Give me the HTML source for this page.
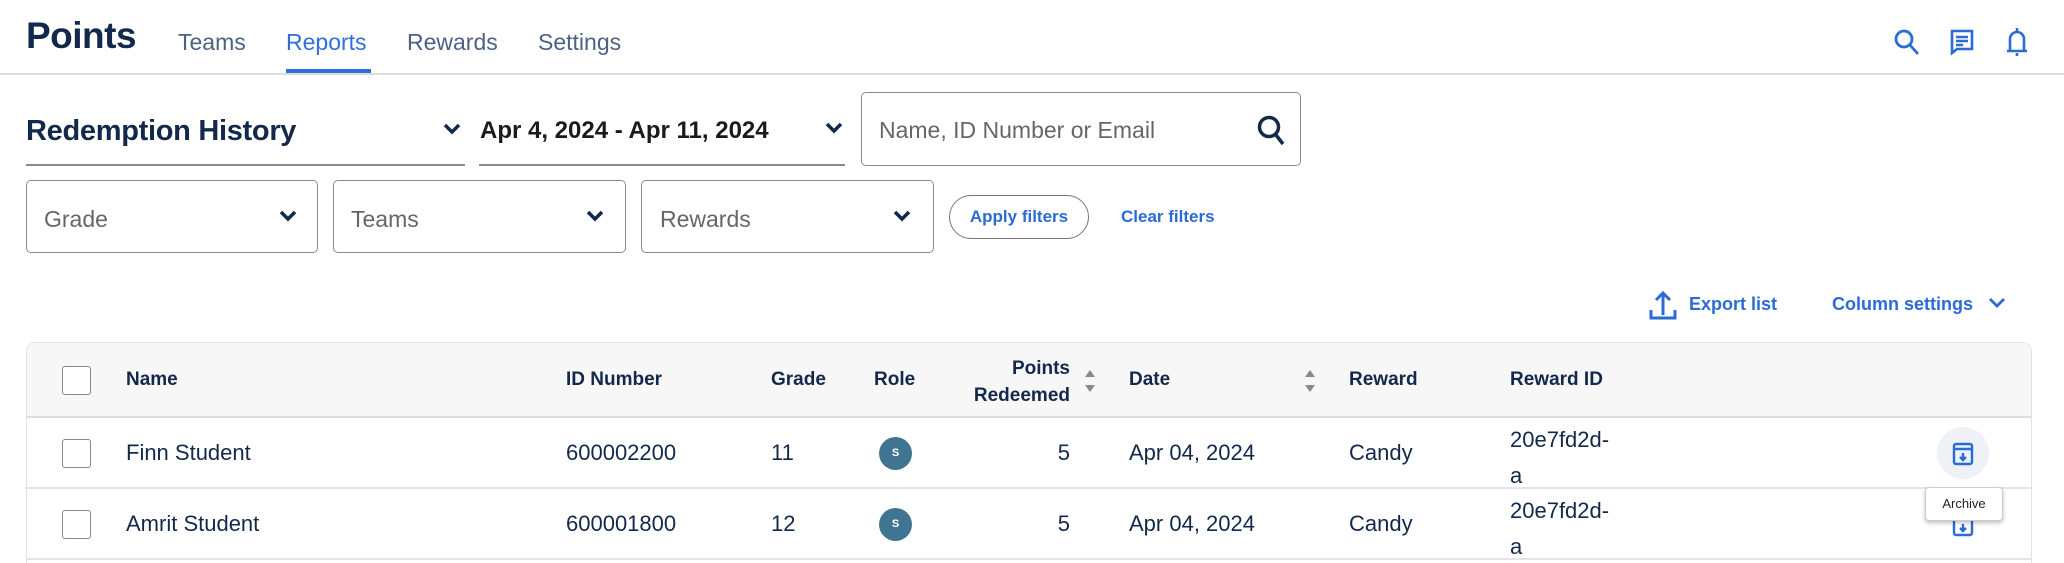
<!DOCTYPE html>
<html><head><meta charset="utf-8"><style>
*{box-sizing:border-box;margin:0;padding:0}
html,body{width:2064px;height:563px;overflow:hidden}
body{background:#fff;font-family:"Liberation Sans",sans-serif;color:#13294b;position:relative}
#w{position:relative;width:2064px;height:563px;overflow:hidden}
.a{position:absolute;white-space:nowrap}
.nav{font-size:23px;color:#4d6185;top:29px}
.hdr{border-bottom:2px solid #dcdcdc;position:absolute;left:0;top:73px;width:2064px}
.box{position:absolute;border:1.5px solid #8a8a8a;border-radius:5px}
.ph{font-size:23px;color:#666}
.th{font-size:19px;font-weight:bold;top:369px}
.td{font-size:22px}
.cb{position:absolute;width:29px;height:29px;border:1.5px solid #888;border-radius:3px;background:#fff}
.badge{position:absolute;width:33px;height:33px;border-radius:50%;background:#3f7591;color:#fff;font-size:11px;font-weight:bold;text-align:center;line-height:33px}
.blue{color:#2a6bd6}
</style></head><body><div id="w">
<div class="a" style="left:26px;top:15px;font-size:37px;font-weight:bold;color:#13294b;letter-spacing:-0.5px">Points</div>
<div class="a nav" style="left:178px">Teams</div>
<div class="a nav" style="left:286px;color:#2f6fdc">Reports</div>
<div class="a nav" style="left:407px">Rewards</div>
<div class="a nav" style="left:538px">Settings</div>
<div class="a" style="left:286px;top:69px;width:85px;height:4px;background:#2f6fdc"></div>
<div class="hdr"></div>
<svg class="a" style="left:1893px;top:28px" width="28" height="28" viewBox="0 0 28 28" fill="none" stroke="#2a6bd6" stroke-width="2.8"><circle cx="11" cy="11" r="8"/><path d="M17 17l8 9"/></svg>
<svg class="a" style="left:1949px;top:28px" width="26" height="28" viewBox="0 0 26 28" fill="none" stroke="#2a6bd6" stroke-width="2.6"><path d="M3 3h20v18H8l-5 4z"/><path d="M7 9h12M7 13h12M7 17h7"/></svg>
<svg class="a" style="left:2004px;top:26px" width="26" height="32" viewBox="0 0 26 32" fill="none" stroke="#2a6bd6" stroke-width="2.6"><path d="M13 2v3M6 24V13a7 7 0 0114 0v11M3 25h20M13 27v3"/></svg>

<div class="a" style="left:26px;top:115px;font-size:29px;font-weight:bold;letter-spacing:-0.3px">Redemption History</div>
<div class="a" style="left:26px;top:164px;width:439px;height:2px;background:#8a8a8a"></div>
<svg class="a" style="left:443px;top:122px" width="18" height="14" viewBox="0 0 18 14" fill="none" stroke="#13294b" stroke-width="3.5"><path d="M2 3l7 7 7-7"/></svg>
<div class="a" style="left:480px;top:117px;font-size:24px;font-weight:bold;color:#1a1a1a">Apr 4, 2024 - Apr 11, 2024</div>
<div class="a" style="left:479px;top:164px;width:366px;height:2px;background:#8a8a8a"></div>
<svg class="a" style="left:825px;top:121px" width="18" height="14" viewBox="0 0 18 14" fill="none" stroke="#13294b" stroke-width="3.5"><path d="M2 3l7 7 7-7"/></svg>
<div class="box" style="left:861px;top:92px;width:440px;height:74px"></div>
<div class="a ph" style="left:879px;top:117px">Name, ID Number or Email</div>
<svg class="a" style="left:1256px;top:114px" width="32" height="34" viewBox="0 0 32 34" fill="none" stroke="#13294b" stroke-width="3.5"><circle cx="13" cy="13" r="9.5"/><path d="M20 21l7 9"/></svg>

<div class="box" style="left:26px;top:180px;width:292px;height:73px"></div>
<div class="a ph" style="left:44px;top:206px">Grade</div>
<div class="box" style="left:333px;top:180px;width:293px;height:73px"></div>
<div class="a ph" style="left:351px;top:206px">Teams</div>
<div class="box" style="left:641px;top:180px;width:293px;height:73px"></div>
<div class="a ph" style="left:660px;top:206px">Rewards</div>
<svg class="a" style="left:279px;top:209px" width="18" height="14" viewBox="0 0 18 14" fill="none" stroke="#13294b" stroke-width="3.5"><path d="M2 3l7 7 7-7"/></svg>
<svg class="a" style="left:586px;top:209px" width="18" height="14" viewBox="0 0 18 14" fill="none" stroke="#13294b" stroke-width="3.5"><path d="M2 3l7 7 7-7"/></svg>
<svg class="a" style="left:893px;top:209px" width="18" height="14" viewBox="0 0 18 14" fill="none" stroke="#13294b" stroke-width="3.5"><path d="M2 3l7 7 7-7"/></svg>
<div class="a" style="left:949px;top:195px;width:140px;height:44px;border:1.5px solid #777;border-radius:22px;text-align:center;line-height:41px;font-size:17px;font-weight:bold;color:#2a6bd6">Apply filters</div>
<div class="a blue" style="left:1121px;top:207px;font-size:17px;font-weight:bold">Clear filters</div>

<svg class="a" style="left:1649px;top:290px" width="28" height="30" viewBox="0 0 28 30" fill="none" stroke="#2a6bd6" stroke-width="3"><path d="M14 25V3M7 10l7-7 7 7M2 20v8h24v-8"/></svg>
<div class="a blue" style="left:1689px;top:294px;font-size:18px;font-weight:bold">Export list</div>
<div class="a blue" style="left:1832px;top:294px;font-size:18px;font-weight:bold">Column settings</div>
<svg class="a" style="left:1988px;top:296px" width="18" height="14" viewBox="0 0 18 14" fill="none" stroke="#2a6bd6" stroke-width="2.8"><path d="M2 3l7 7 7-7"/></svg>

<div class="a" style="left:26px;top:342px;width:2006px;height:221px;border:1.5px solid #e2e2e2;border-bottom:none;border-radius:10px 10px 0 0;overflow:hidden">
 <div style="height:75px;background:#f7f7f7;border-bottom:2px solid #dedede"></div>
 <div style="height:71px;border-bottom:2px solid #e4e4e4"></div>
 <div style="height:71px;border-bottom:2px solid #e4e4e4"></div>
</div>
<div class="cb" style="left:62px;top:366px"></div>
<div class="a th" style="left:126px">Name</div>
<div class="a th" style="left:566px">ID Number</div>
<div class="a th" style="left:771px">Grade</div>
<div class="a th" style="left:874px">Role</div>
<div class="a" style="left:940px;top:355px;width:130px;text-align:right;font-size:19px;font-weight:bold;line-height:27px;white-space:normal">Points<br>Redeemed</div>
<svg class="a" style="left:1083px;top:368px" width="14" height="26" viewBox="0 0 14 26" fill="#888"><path d="M7 2l5 7H2zM7 24l5-7H2z"/></svg>
<div class="a th" style="left:1129px">Date</div>
<svg class="a" style="left:1303px;top:368px" width="14" height="26" viewBox="0 0 14 26" fill="#888"><path d="M7 2l5 7H2zM7 24l5-7H2z"/></svg>
<div class="a th" style="left:1349px">Reward</div>
<div class="a th" style="left:1510px">Reward ID</div>

<div class="cb" style="left:62px;top:439px"></div>
<div class="a td" style="left:126px;top:440px">Finn Student</div>
<div class="a td" style="left:566px;top:440px">600002200</div>
<div class="a td" style="left:771px;top:440px">11</div>
<div class="badge" style="left:879px;top:437px">S</div>
<div class="a td" style="left:1040px;top:440px;width:30px;text-align:right">5</div>
<div class="a td" style="left:1129px;top:440px">Apr 04, 2024</div>
<div class="a td" style="left:1349px;top:440px">Candy</div>
<div class="a td" style="left:1510px;top:422px;line-height:36px">20e7fd2d-<br>a</div>
<div class="a" style="left:1937px;top:427px;width:52px;height:52px;border-radius:50%;background:#eef2f7"></div>
<svg class="a" style="left:1952px;top:442px" width="22" height="24" viewBox="0 0 22 24" fill="none" stroke="#2a6bd6" stroke-width="2.4"><rect x="2" y="2" width="18" height="20" rx="2"/><path d="M2 7h18M11 11v7M8 15l3 3 3-3"/></svg>

<div class="cb" style="left:62px;top:510px"></div>
<div class="a td" style="left:126px;top:511px">Amrit Student</div>
<div class="a td" style="left:566px;top:511px">600001800</div>
<div class="a td" style="left:771px;top:511px">12</div>
<div class="badge" style="left:879px;top:508px">S</div>
<div class="a td" style="left:1040px;top:511px;width:30px;text-align:right">5</div>
<div class="a td" style="left:1129px;top:511px">Apr 04, 2024</div>
<div class="a td" style="left:1349px;top:511px">Candy</div>
<div class="a td" style="left:1510px;top:493px;line-height:36px">20e7fd2d-<br>a</div>
<svg class="a" style="left:1952px;top:513px" width="22" height="24" viewBox="0 0 22 24" fill="none" stroke="#2a6bd6" stroke-width="2.4"><rect x="2" y="2" width="18" height="20" rx="2"/><path d="M11 11v7M8 15l3 3 3-3"/></svg>
<div class="a" style="left:1925px;top:487px;width:78px;height:34px;background:#fff;border:1px solid #ccc;border-radius:4px;box-shadow:0 2px 4px rgba(0,0,0,.25);font-size:13px;text-align:center;line-height:32px;color:#222">Archive</div>
</div></body></html>
